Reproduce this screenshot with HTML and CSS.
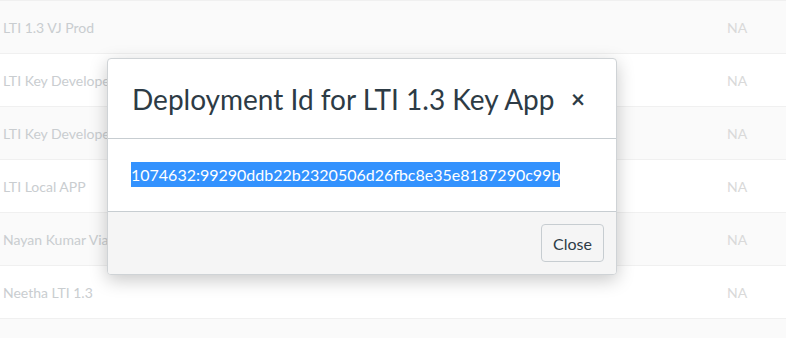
FILE: index.html
```html
<!DOCTYPE html>
<html lang="en">
<head>
    <meta charset="UTF-8">
    <meta name="viewport" content="width=device-width, initial-scale=1.0">
    <title>Developer Keys</title>
    <link rel="stylesheet" href="styles.css">
</head>
<body>

    <!-- Keys table behind the dialog -->
    <table class="key-table">
        <tbody>
            <tr>
                <td class="key-name">LTI 1.3 VJ Prod</td>
                <td class="key-notes">NA</td>
            </tr>
            <tr>
                <td class="key-name">LTI Key Developer</td>
                <td class="key-notes">NA</td>
            </tr>
            <tr>
                <td class="key-name">LTI Key Developer</td>
                <td class="key-notes">NA</td>
            </tr>
            <tr>
                <td class="key-name">LTI Local APP</td>
                <td class="key-notes">NA</td>
            </tr>
            <tr>
                <td class="key-name">Nayan Kumar Via</td>
                <td class="key-notes">NA</td>
            </tr>
            <tr>
                <td class="key-name">Neetha LTI 1.3</td>
                <td class="key-notes">NA</td>
            </tr>
            <tr class="last-row">
                <td class="key-name"></td>
                <td class="key-notes"></td>
            </tr>
        </tbody>
    </table>

    <!-- Deployment Id dialog -->
    <div class="modal">
        <div class="modal-header">
            <h2>Deployment Id for LTI 1.3 Key App</h2>
            <button class="modal-close">&times;</button>
        </div>
        <div class="modal-body">
            <span class="deploy-id">1074632:99290ddb22b2320506d26fbc8e35e8187290c99b</span>
        </div>
        <div class="modal-footer">
            <button class="btn">Close</button>
        </div>
    </div>

</body>
</html>
```

FILE: styles.css
```css
body {
    font-family: 'Lato', 'Liberation Sans', sans-serif;
    margin: 0;
    padding: 0;
    background-color: #fff;
    color: #2d3b45;
    overflow: hidden;
}
.key-table {
    width: 100%;
    border-collapse: collapse;
}
.key-table td {
    height: 52px;
    padding: 0;
    border-top: 1px solid #f0f0f0;
    font-size: 14px;
    color: #c9cdd0;
}
.key-table tr:nth-child(odd) {
    background-color: #fafafa;
}
.key-table .last-row td {
    height: 19px;
}
.key-name {
    padding-left: 3px !important;
}
.key-notes {
    width: 59px;
    color: #d9d9d9 !important;
}
.modal {
    position: absolute;
    top: 58px;
    left: 107px;
    width: 508px;
    background-color: #fff;
    border: 1px solid #cfd3d6;
    border-radius: 4px;
    box-shadow: 0 5px 18px rgba(0, 0, 0, 0.22);
    overflow: hidden;
}
.modal-header {
    display: flex;
    align-items: center;
    justify-content: space-between;
    height: 79px;
    padding: 0 24px;
    border-bottom: 1px solid #c7cdd1;
}
.modal-header h2 {
    margin: 0;
    font-size: 28px;
    font-weight: normal;
}
.modal-close {
    background: none;
    border: none;
    padding: 0;
    margin-right: 7px;
    font-family: inherit;
    font-size: 24px;
    font-weight: bold;
    color: #2d3b45;
    cursor: pointer;
}
.modal-body {
    padding: 24px 23px;
    font-size: 16px;
    line-height: 24px;
}
.deploy-id {
    background-color: #3392fe;
    color: #fff;
    padding: 3px 0;
}
.modal-footer {
    display: flex;
    justify-content: flex-end;
    padding: 12px 12px;
    background-color: #f5f5f5;
    border-top: 1px solid #c7cdd1;
}
.btn {
    height: 38px;
    padding: 0 11px;
    font-family: inherit;
    font-size: 16px;
    color: #2d3b45;
    background-color: #f5f5f5;
    border: 1px solid #c7cdd1;
    border-radius: 4px;
    cursor: pointer;
}
```
